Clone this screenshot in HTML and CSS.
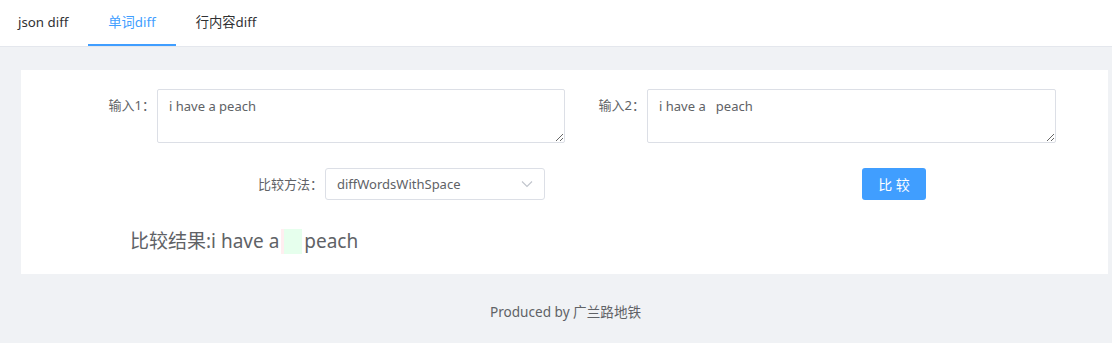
FILE: index.html
```html
<!DOCTYPE html>
<html lang="zh">
<head>
<meta charset="utf-8">
<link rel="stylesheet" href="styles.css">
</head>
<body>
<div class="tabs">
  <div class="tab first">json diff</div>
  <div class="tab active">单词diff</div>
  <div class="tab">行内容diff</div>
</div>
<div class="main">
  <div class="card">
    <div class="row row1">
      <div class="field f1">
        <label class="lbl l1">输入1：</label>
        <textarea class="ta ta1">i have a peach</textarea>
      </div>
      <div class="field f2">
        <label class="lbl l2">输入2：</label>
        <textarea class="ta ta2">i have a   peach</textarea>
      </div>
    </div>
    <div class="row row2">
      <div class="field f3">
        <label class="lbl l3">比较方法：</label>
        <div class="select">
          <span class="sel-text">diffWordsWithSpace</span>
          <svg class="chev" width="12" height="8" viewBox="0 0 12 8"><path d="M1 1.5 L6 6.5 L11 1.5" fill="none" stroke="#c0c4cc" stroke-width="1.1"/></svg>
        </div>
      </div>
      <button class="btn">比 较</button>
    </div>
    <div class="result">比较结果:i have a<span class="del"></span><span class="ins"></span>peach</div>
  </div>
  <div class="footer">Produced by 广兰路地铁</div>
</div>
</body>
</html>
```
FILE: styles.css
```css
* { box-sizing: border-box; }
html, body { margin: 0; padding: 0; }
body {
  width: 1112px;
  height: 343px;
  overflow: hidden;
  background: #f0f2f5;
  font-family: "Noto Sans", "Noto Sans CJK SC", sans-serif;
  color: #606266;
}
.tabs {
  display: flex;
  height: 47px;
  background: #fff;
  padding-left: 18px;
  border-bottom: 1px solid #e4e7ed;
}
.tab {
  height: 46px;
  line-height: 44px;
  padding: 0 20px;
  font-size: 13.3px;
  color: #303133;
  border-bottom: 2px solid transparent;
}
.tab.first { padding-left: 0; }
.tab.active { color: #409eff; border-bottom-color: #409eff; }
.main { padding: 23px 4px 0 21px; }
.card {
  background: #fff;
  width: 1087px;
  height: 204px;
  padding-top: 19px;
}
.row { display: flex; }
.field { display: flex; }
.lbl {
  font-size: 13px;
  color: #606266;
  text-align: right;
  padding-right: 2px;
  line-height: 32px;
}
.l1 { width: 136px; }
.l2 { width: 82px; }
.ta {
  height: 54px;
  border: 1px solid #dcdfe6;
  border-radius: 2px;
  padding: 7px 11px;
  font-family: inherit;
  font-size: 13px;
  color: #606266;
  resize: vertical;
  white-space: pre;
}
.ta1 { width: 408px; }
.ta2 { width: 409px; }
.row2 { margin-top: 25px; align-items: center; }
.l3 { width: 304px; }
.select {
  width: 220px;
  height: 32px;
  border: 1px solid #dcdfe6;
  border-radius: 3px;
  display: flex;
  align-items: center;
  justify-content: space-between;
  padding: 0 11px 0 11px;
  font-size: 13px;
  color: #606266;
}
.chev { display: block; }
.btn {
  margin-left: 317px;
  width: 64px;
  height: 32px;
  border: none;
  border-radius: 3px;
  background: #409eff;
  color: #fff;
  font-family: inherit;
  font-size: 14px;
  padding: 0;
}
.result {
  margin-top: 28px;
  padding-left: 109px;
  font-size: 19px;
  color: #606266;
  line-height: 26px;
}
.del, .ins { display: inline-block; height: 25px; vertical-align: -6px; }
.del { width: 3px; background: #ffeef0; margin-left: 2px; }
.ins { width: 18px; background: #e6ffed; margin-right: 2px; }
.footer {
  text-align: center;
  font-size: 13.6px;
  color: #606266;
  padding-top: 27px;
  margin-left: -21px;
  margin-right: -4px;
  padding-left: 19px;
}
```
